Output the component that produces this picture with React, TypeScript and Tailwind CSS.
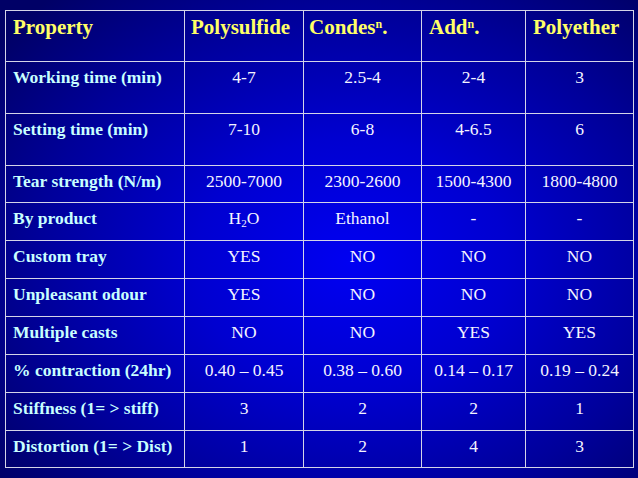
import React from 'react';

type Row = { label: string; values: React.ReactNode[]; h: string };

const rows: Row[] = [
  { label: 'Working time (min)', values: ['4-7', '2.5-4', '2-4', '3'], h: 'h-[52px]' },
  { label: 'Setting time (min)', values: ['7-10', '6-8', '4-6.5', '6'], h: 'h-[52px]' },
  { label: 'Tear strength (N/m)', values: ['2500-7000', '2300-2600', '1500-4300', '1800-4800'], h: 'h-[37px]' },
  {
    label: 'By product',
    values: [
      <>
        H<sub className="text-[11px]">2</sub>O
      </>,
      'Ethanol',
      '-',
      '-',
    ],
    h: 'h-[38px]',
  },
  { label: 'Custom tray', values: ['YES', 'NO', 'NO', 'NO'], h: 'h-[38px]' },
  { label: 'Unpleasant odour', values: ['YES', 'NO', 'NO', 'NO'], h: 'h-[38px]' },
  { label: 'Multiple casts', values: ['NO', 'NO', 'YES', 'YES'], h: 'h-[38px]' },
  { label: '% contraction (24hr)', values: ['0.40 – 0.45', '0.38 – 0.60', '0.14 – 0.17', '0.19 – 0.24'], h: 'h-[38px]' },
  { label: 'Stiffness (1= > stiff)', values: ['3', '2', '2', '1'], h: 'h-[38px]' },
  { label: 'Distortion (1= > Dist)', values: ['1', '2', '4', '3'], h: 'h-[37px]' },
];

const cell = 'border-[1.5px] border-[#d4d4e8] align-top';

export default function App() {
  return (
    <div className="w-[638px] h-[478px] overflow-hidden pt-[10px] pl-[5px] bg-[radial-gradient(ellipse_70%_75%_at_55%_55%,#0000f2_0%,#0000d0_35%,#00009a_70%,#000066_100%)]">
      <table className="table-fixed border-collapse w-[628px] font-[Liberation_Serif,serif]">
        <colgroup>
          <col className="w-[179px]" />
          <col className="w-[119px]" />
          <col className="w-[118px]" />
          <col className="w-[104px]" />
          <col className="w-[108px]" />
        </colgroup>
        <thead>
          <tr className="h-[51px] text-[21px] leading-[24px] font-bold text-[#ffff66]">
            <th className={`${cell} text-left pl-[7px] pt-[4px]`}>Property</th>
            <th className={`${cell} text-left pl-[6px] pt-[4px]`}>Polysulfide</th>
            <th className={`${cell} text-left pl-[5px] pt-[4px] whitespace-nowrap`}>
              Condes<sup className="text-[12px]">n</sup>.
            </th>
            <th className={`${cell} text-left pl-[7px] pt-[4px]`}>
              Add<sup className="text-[12px]">n</sup>.
            </th>
            <th className={`${cell} text-left pl-[7px] pt-[4px]`}>Polyether</th>
          </tr>
        </thead>
        <tbody>
          {rows.map((r) => (
            <tr key={r.label} className={`${r.h} text-[17.5px] leading-[21px]`}>
              <td className={`${cell} pl-[7px] pt-[5px] font-bold text-[#c8ffff] whitespace-nowrap`}>{r.label}</td>
              {r.values.map((v, i) => (
                <td key={i} className={`${cell} pt-[5px] text-center text-[#f4f4ff] whitespace-nowrap`}>
                  {v}
                </td>
              ))}
            </tr>
          ))}
        </tbody>
      </table>
    </div>
  );
}
